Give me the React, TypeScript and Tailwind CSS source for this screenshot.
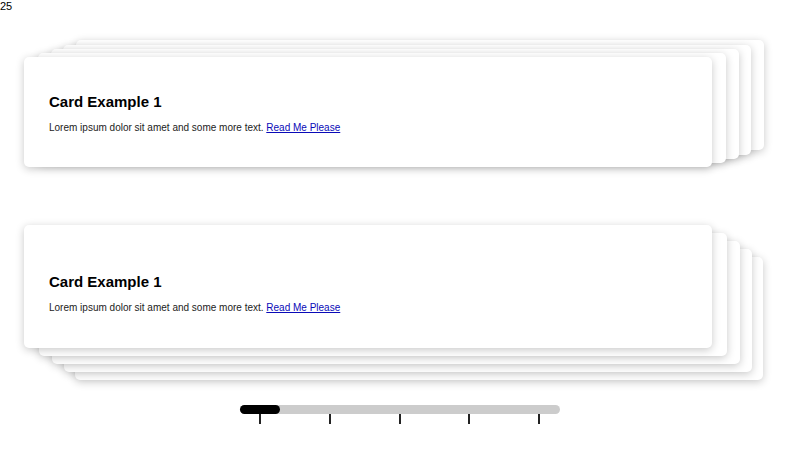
const topOffsets = [
  'translate-x-[52px] -translate-y-[17px]',
  'translate-x-[39px] -translate-y-[12px]',
  'translate-x-[27px] -translate-y-[8px]',
  'translate-x-[14px] -translate-y-[4px]',
];

const bottomOffsets = [
  'translate-x-[51px] translate-y-[32px]',
  'translate-x-[40px] translate-y-[24px]',
  'translate-x-[28px] translate-y-[16px]',
  'translate-x-[15px] translate-y-[8px]',
];

const cardBase = 'rounded-[5px] bg-white shadow-[0_2px_8px_rgba(0,0,0,0.22)]';

function CardBody() {
  return (
    <>
      <h2 className="text-[15px] leading-[18px] font-bold text-black">Card Example 1</h2>
      <p className="mt-[11px] text-[10px] leading-[12px] text-[#222]">
        Lorem ipsum dolor sit amet and some more text.{' '}
        <a href="#" className="text-[#0a0ab8] underline">
          Read Me Please
        </a>
      </p>
    </>
  );
}

function Stack({ offsets, height, padTop }: { offsets: string[]; height: string; padTop: string }) {
  return (
    <div className={`relative ml-[24px] w-[688px] ${height}`}>
      {offsets.map((o, i) => (
        <div key={i} className={`absolute inset-0 ${cardBase} ${o}`} />
      ))}
      <div className={`relative h-full ${cardBase} ${padTop} pl-[25px]`}>
        <CardBody />
      </div>
    </div>
  );
}

const ticks = [0, 1, 2, 3, 4];

export default function App() {
  return (
    <div className="h-[450px] w-[800px] overflow-hidden bg-white font-['Liberation_Sans',Arial,sans-serif]">
      <div className="h-[12px] text-[11px] leading-[12px] text-black">25</div>

      <div className="mt-[45px]">
        <Stack offsets={topOffsets} height="h-[110px]" padTop="pt-[36px]" />
      </div>

      <div className="mt-[58px]">
        <Stack offsets={bottomOffsets} height="h-[123px]" padTop="pt-[48px]" />
      </div>

      {/* slider */}
      <div className="mt-[57px] ml-[240px] w-[320px]">
        <div className="h-[9px] rounded-full bg-[#cccccc]">
          <div className="h-full w-[40px] rounded-full bg-black" />
        </div>
        <div className="flex w-[300px] justify-between pl-[19px]">
          {ticks.map((t) => (
            <div key={t} className="h-[10px] w-[2px] bg-[#222]" />
          ))}
        </div>
      </div>
    </div>
  );
}
